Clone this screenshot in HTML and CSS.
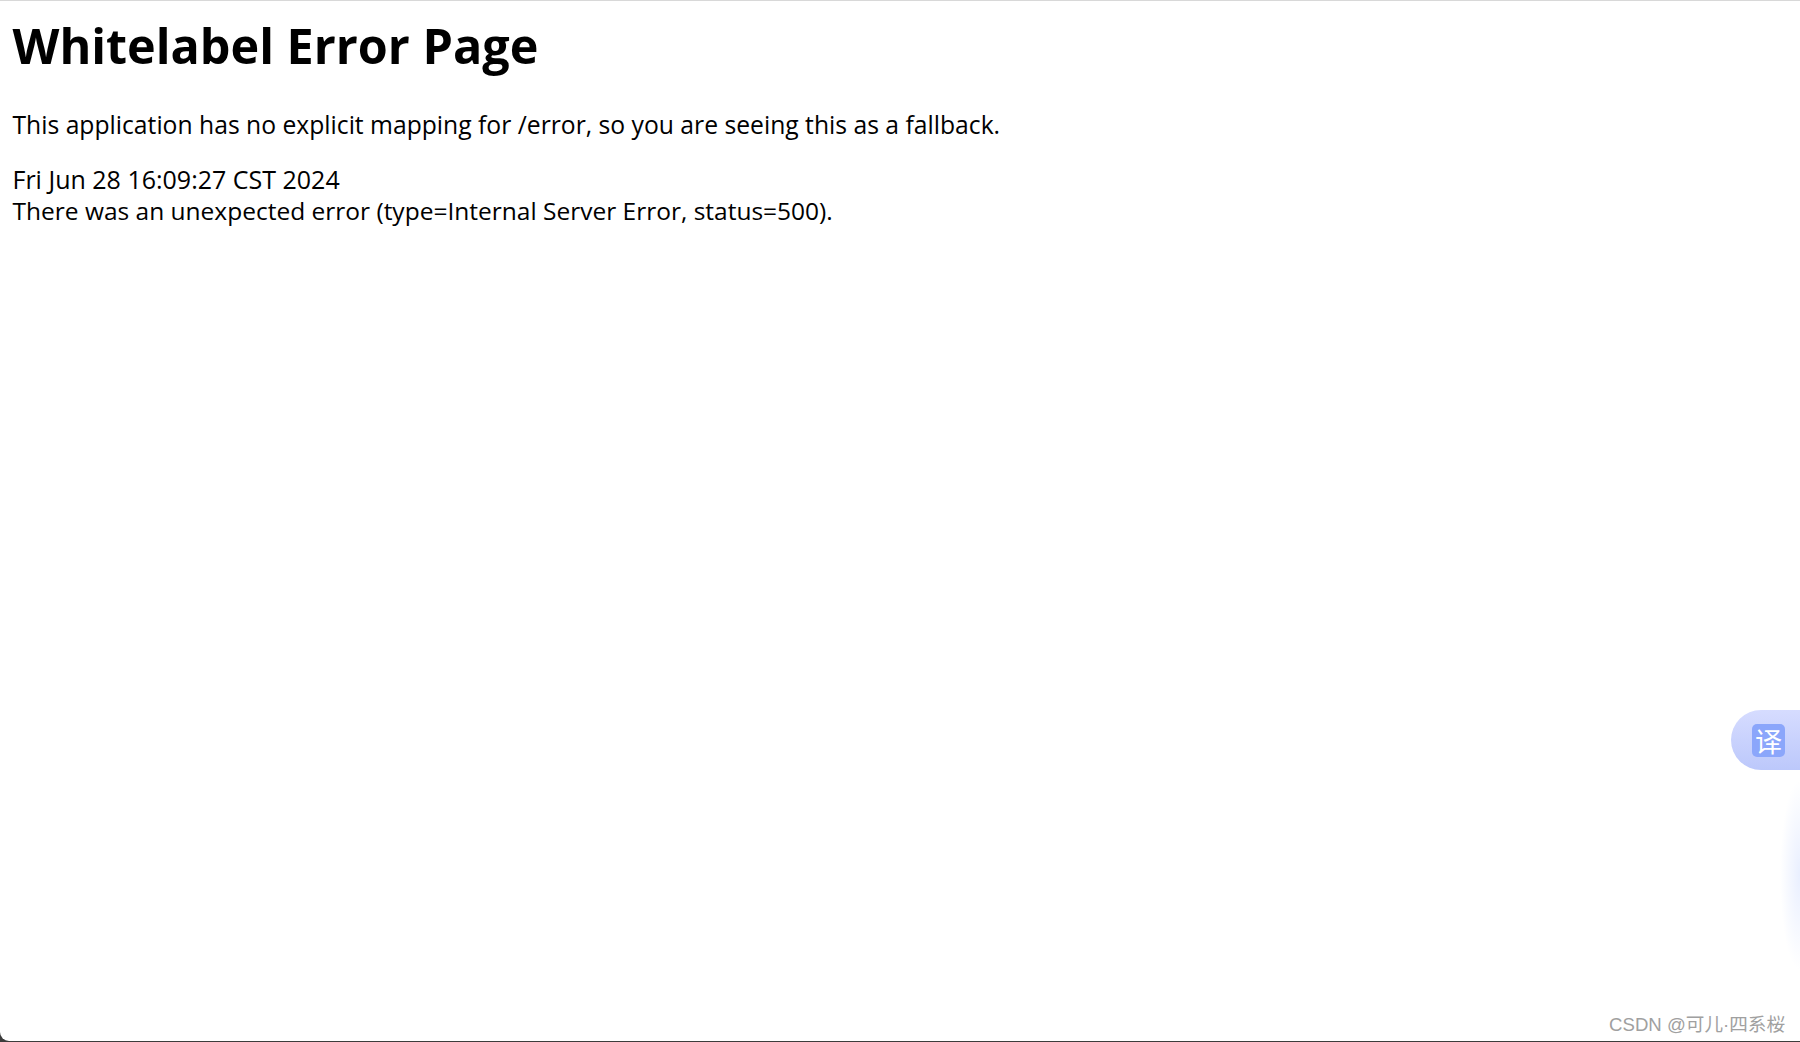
FILE: index.html
```html
<!DOCTYPE html>
<html lang="en">
<head>
<meta charset="utf-8">
<title>Whitelabel Error Page</title>
<link rel="stylesheet" href="styles.css">
</head>
<body>
<main class="page">
  <h1 class="title">Whitelabel Error Page</h1>
  <p class="intro">This application has no explicit mapping for /error, so you are seeing this as a fallback.</p>
  <div class="time">Fri Jun 28 16:09:27 CST 2024</div>
  <div class="detail">There was an unexpected error (type=Internal Server Error, status=500).</div>
</main>
<div class="glow"></div>
<div class="translate"><span class="translate-icon">译</span></div>
<div class="watermark">CSDN @可儿·四系桜</div>
</body>
</html>
```
FILE: styles.css
```css
html { margin: 0; height: 100%; overflow: hidden; background: #3c3c3c; }
body { margin: 0; height: 1041px; overflow: hidden; position: relative; background: #fff; border-bottom-left-radius: 9px; font-family: "Open Sans", "Noto Sans", sans-serif; color: #000; font-size: 25px; line-height: 31px; }
.page { padding: 0 12.5px; border-top: 1px solid #d8d8d8; }
.title { margin: 10px 0 0; font-size: 48.5px; line-height: 68px; font-weight: 700; }
.intro { margin: 30px 0 24px; font-size: 24.7px; }
.detail { font-size: 24.5px; }
.glow { position: absolute; right: 0; top: 780px; width: 20px; height: 190px; background: radial-gradient(ellipse 20px 95px at 100% 50%, #e9efff 0%, #ffffff 100%); }
.translate { position: absolute; right: 0; top: 710px; width: 69px; height: 60px; border-radius: 30px 0 0 30px; background: linear-gradient(#d6dcff, #bcc8fb); display: flex; align-items: center; padding-left: 21px; box-sizing: border-box; }
.translate-icon { width: 33px; height: 33px; background: #8ba6fb; border-radius: 5px; color: #fff; font: 27px/33px "Noto Sans CJK SC", sans-serif; text-align: center; }
.watermark { position: absolute; right: 15px; bottom: 3px; font: 18.6px/27px "Liberation Sans", "Noto Sans CJK SC", sans-serif; color: #a0a0a0; }
```
